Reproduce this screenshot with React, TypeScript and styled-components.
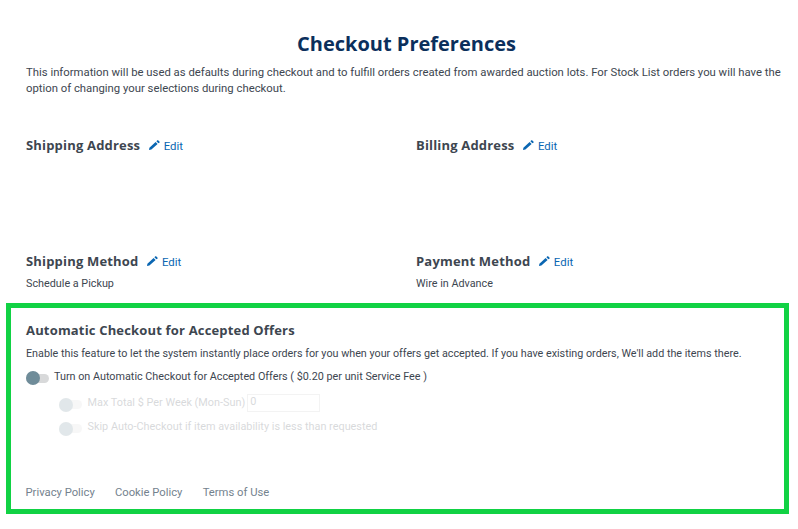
import styled, { createGlobalStyle } from 'styled-components';

const GlobalStyle = createGlobalStyle`
	html, body {
		margin: 0;
		padding: 0;
		background: #fff;
	}
	body {
		font-family: Roboto, "Liberation Sans", sans-serif;
		font-size: 10.8px;
		color: #3d4650;
	}
`;

const PencilIcon = () => (
	<svg width="11" height="10" viewBox="0 0 11 10" fill="#0a66b2">
		<path d="M0 10 L0.4 7.8 L6.6 1.9 L8.6 3.9 L2.4 9.6 Z M7.4 1.2 L8.3 0.3 Q8.7 0 9.1 0.3 L10.6 1.7 Q11 2.1 10.6 2.5 L9.4 3.2 Z" />
	</svg>
);

const Section = ({ title, value, tall }: { title: string; value?: string; tall?: boolean }) => (
	<SectionBlock $tall={tall}>
		<SectionHead>
			<SectionTitle>{title}</SectionTitle>
			<PencilIcon />
			<EditLink>Edit</EditLink>
		</SectionHead>
		{value && <SectionValue>{value}</SectionValue>}
	</SectionBlock>
);

export default function App() {
	return (
		<Page>
			<GlobalStyle />
			<Top>
				<PageTitle>Checkout Preferences</PageTitle>
				<Intro>
					This information will be used as defaults during checkout and to fulfill orders created from awarded auction lots. For Stock List orders you will have the option of changing your selections during checkout.
				</Intro>
				<SectionGrid>
					<Section title="Shipping Address" tall />
					<Section title="Billing Address" tall />
					<Section title="Shipping Method" value="Schedule a Pickup" />
					<Section title="Payment Method" value="Wire in Advance" />
				</SectionGrid>
			</Top>
			<OfferBox>
				<OfferTitle>Automatic Checkout for Accepted Offers</OfferTitle>
				<OfferText>
					Enable this feature to let the system instantly place orders for you when your offers get accepted. If you have existing orders, We'll add the items there.
				</OfferText>
				<ToggleRow>
					<Toggle />
					<span>Turn on Automatic Checkout for Accepted Offers ( $0.20 per unit Service Fee )</span>
				</ToggleRow>
				<SubOptions>
					<SubRow>
						<Toggle />
						<span>Max Total $ Per Week (Mon-Sun)</span>
						<AmountInput>0</AmountInput>
					</SubRow>
					<SubRow>
						<Toggle />
						<span>Skip Auto-Checkout if item availability is less than requested</span>
					</SubRow>
				</SubOptions>
				<Footer>
					<FooterLink>Privacy Policy</FooterLink>
					<FooterLink>Cookie Policy</FooterLink>
					<FooterLink>Terms of Use</FooterLink>
				</Footer>
			</OfferBox>
		</Page>
	);
}

const Page = styled.div`
	width: 798px;
	height: 529px;
	overflow: hidden;
	box-sizing: border-box;
	padding-top: 32px;
`;

const Top = styled.div`
	padding: 0 11px 0 26px;
`;

const PageTitle = styled.h1`
	margin: 0 0 9px;
	font-family: "Open Sans", sans-serif;
	font-size: 20px;
	line-height: 24px;
	font-weight: 700;
	color: #0b2f5c;
	text-align: center;
`;

const Intro = styled.p`
	margin: 0;
	font-size: 11.32px;
	line-height: 15.5px;
`;

const SectionGrid = styled.div`
	display: grid;
	grid-template-columns: 390px 1fr;
	margin-top: 39px;
`;

const SectionBlock = styled.div<{ $tall?: boolean }>`
	height: ${(p) => (p.$tall ? '116px' : 'auto')};
`;

const SectionHead = styled.div`
	display: flex;
	align-items: center;
	gap: 8.5px;
	height: 20px;
`;

const SectionTitle = styled.h3`
	margin: 0;
	font-family: "Open Sans", sans-serif;
	font-size: 13px;
	font-weight: 700;
	letter-spacing: 0.18px;
	color: #3d4650;
`;

const EditLink = styled.a`
	margin-left: -4.5px;
	color: #0a66b2;
	font-size: 11.4px;
	padding-top: 1px;
`;

const SectionValue = styled.div`
	margin-top: 5px;
	line-height: 16px;
`;

const OfferBox = styled.section`
	position: relative;
	box-sizing: border-box;
	width: 783px;
	height: 211px;
	margin: 11px 0 0 6px;
	padding: 13px 15px 0;
	border: 5px solid #11d244;
`;

const OfferTitle = styled.h3`
	margin: 0;
	font-family: "Open Sans", sans-serif;
	font-size: 13px;
	line-height: 18px;
	font-weight: 700;
	letter-spacing: 0.17px;
	color: #3d4650;
`;

const OfferText = styled.p`
	margin: 7px 0 0;
	font-size: 10.77px;
	line-height: 16px;
`;

const ToggleRow = styled.div`
	display: flex;
	align-items: center;
	gap: 5px;
	margin-top: 6px;
	height: 16px;
`;

const Toggle = styled.span`
	position: relative;
	flex: none;
	width: 23px;
	height: 9px;
	margin-top: 4px;
	border-radius: 5px;
	background: #d8d9da;
	&::before {
		content: '';
		position: absolute;
		left: 0;
		top: -2.5px;
		width: 14px;
		height: 14px;
		border-radius: 50%;
		background: #6f8c99;
	}
`;

const SubOptions = styled.div`
	display: flex;
	flex-direction: column;
	gap: 7px;
	margin: 10px 0 0 33px;
	font-size: 10.87px;
	opacity: 0.2;
`;

const SubRow = styled.div`
	display: flex;
	align-items: center;
	gap: 5.5px;
	height: 17px;
`;

const AmountInput = styled.span`
	box-sizing: border-box;
	width: 73px;
	height: 18px;
	margin-left: -3.5px;
	padding-left: 2px;
	border: 1px solid #c8c8c8;
	line-height: 14px;
`;

const Footer = styled.div`
	position: absolute;
	left: 14.5px;
	bottom: 10px;
	display: flex;
	gap: 20.2px;
`;

const FooterLink = styled.a`
	color: #74828e;
	font-size: 11.25px;
`;
